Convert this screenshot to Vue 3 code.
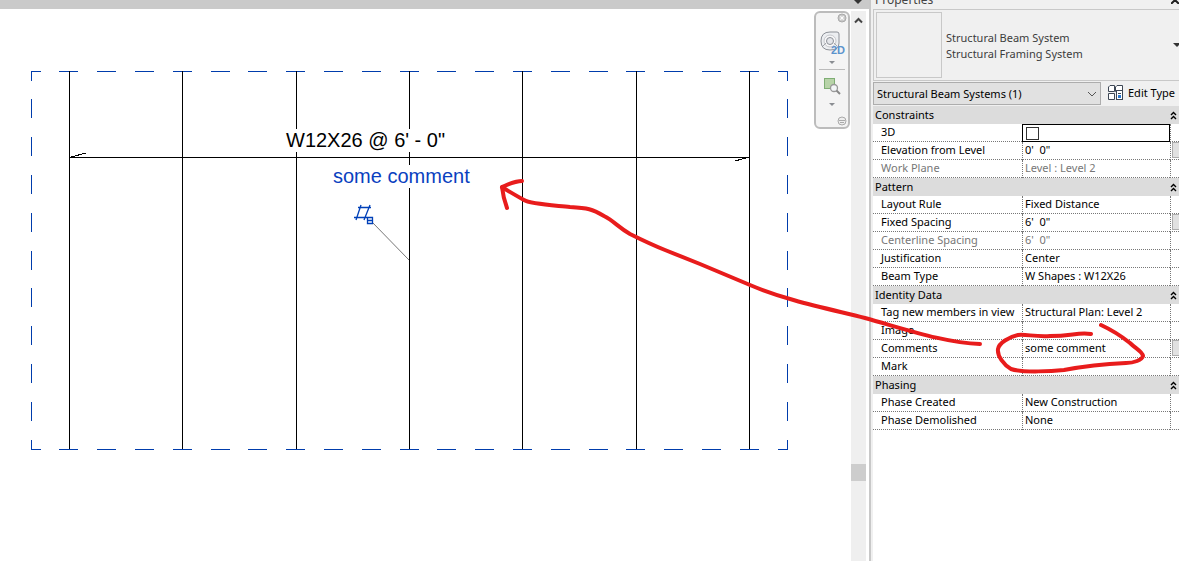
<script setup>
import { ref } from 'vue'

const selectedFilter = ref('Structural Beam Systems (1)')
const is3d = ref(false)

const beams = [
  'M69.5 71V449',
  'M182.5 71V449',
  'M296.5 71V129M296.5 152V449',
  'M409.5 71V129M409.5 152V165M409.5 188V449',
  'M522.5 71V449',
  'M636.5 71V449',
  'M749.5 71V449'
]

const groups = [
  {
    name: 'Constraints',
    rows: [
      { label: '3D', type: 'check' },
      { label: 'Elevation from Level', value: '0\'  0"', button: true },
      { label: 'Work Plane', value: 'Level : Level 2', readonly: true }
    ]
  },
  {
    name: 'Pattern',
    rows: [
      { label: 'Layout Rule', value: 'Fixed Distance' },
      { label: 'Fixed Spacing', value: '6\'  0"', button: true },
      { label: 'Centerline Spacing', value: '6\'  0"', readonly: true },
      { label: 'Justification', value: 'Center' },
      { label: 'Beam Type', value: 'W Shapes : W12X26' }
    ]
  },
  {
    name: 'Identity Data',
    rows: [
      { label: 'Tag new members in view', value: 'Structural Plan: Level 2' },
      { label: 'Image', value: '' },
      { label: 'Comments', value: 'some comment', button: true },
      { label: 'Mark', value: '' }
    ]
  },
  {
    name: 'Phasing',
    rows: [
      { label: 'Phase Created', value: 'New Construction' },
      { label: 'Phase Demolished', value: 'None' }
    ]
  }
]
</script>

<template>
<div class="app">
  <main class="view">
    <div class="view-bar">
      <svg width="8" height="4" viewBox="0 0 8 4"><path d="M0 0H8L4 4Z" fill="#333" /></svg>
    </div>
    <div class="view-body">
      <div class="canvas">
        <svg class="plan" width="800" height="460" viewBox="0 9 800 460">
          <g fill="none" stroke="#003cac" stroke-dasharray="19 18.8" stroke-dashoffset="9.4" shape-rendering="crispEdges">
            <path d="M31 71.5H788" />
            <path d="M31 449.5H788" />
            <path d="M31.5 71V450" />
            <path d="M787.5 71V450" />
          </g>
          <g fill="none" stroke="#000" shape-rendering="crispEdges">
            <path v-for="d in beams" :key="d" :d="d" />
            <path d="M69 157.5H750M71 157L86 153M735 161L749 157" />
          </g>
          <path d="M372 222L409 260" stroke="#777" />
          <g fill="none" stroke="#0040b8" stroke-width="1.3">
            <path d="M358 207.5H371M354 217.5H367M361 205L356 220M370 205L364 220" />
            <path d="M367.5 217.500H372.500V223.500H367.500ZM367.500 220.500H372" />
          </g>
          <text x="286" y="147" class="tag">W12X26 @ 6' - 0"</text>
          <text x="333" y="183" class="tag comment">some comment</text>
        </svg>
        <div class="nav-bar">
          <button class="nav-close" aria-label="Close">
            <svg width="10" height="10" viewBox="0 0 10 10">
              <circle cx="5" cy="5" r="4" fill="#c9c9c9" stroke="#aaa" />
              <path d="M3.4 3.4L6.6 6.6M6.6 3.4L3.4 6.6" stroke="#fff" stroke-width="1.2" />
            </svg>
          </button>
          <button class="nav-wheel" aria-label="Steering wheel">
            <svg width="26" height="26" viewBox="0 0 26 26">
              <path d="M2 10Q2 1 11 1H18Q20 1 20 3V12Q20 19 11 19Q2 19 2 10Z" fill="#eceef1" stroke="#8c9097" />
              <circle cx="11" cy="10" r="6" fill="#f8f8f9" stroke="#c6c8cc" />
              <circle cx="11" cy="10" r="3.5" fill="#e4e6ea" stroke="#8c9097" />
              <path d="M4 15L7 12M15 12L18 15" stroke="#a6a9ae" />
              <text x="12" y="23" class="nav-2d">2D</text>
            </svg>
          </button>
          <svg class="nav-arrow" width="6" height="4" viewBox="0 0 6 4"><path d="M0 0H6L3 3Z" fill="#8a8d92" /></svg>
          <hr />
          <button class="nav-zoom" aria-label="Zoom region">
            <svg width="18" height="18" viewBox="0 0 18 18">
              <rect x="1.5" y="1.5" width="10" height="10" fill="#b7d3a8" stroke="#7fae74" />
              <circle cx="11" cy="11" r="3.5" fill="#f3f6f8" stroke="#999" stroke-width="1.3" />
              <path d="M13.5 13.5L17 17" stroke="#888" stroke-width="2" />
            </svg>
          </button>
          <svg class="nav-arrow" width="6" height="4" viewBox="0 0 6 4"><path d="M0 0H6L3 3Z" fill="#8a8d92" /></svg>
          <button class="nav-options" aria-label="Options">
            <svg width="10" height="10" viewBox="0 0 10 10">
              <circle cx="5" cy="5" r="4" fill="#eee" stroke="#aaa" />
              <path d="M2 4.500H8M3 6.500H7" stroke="#aaa" />
            </svg>
          </button>
        </div>
      </div>
      <div class="scrollbar">
        <svg width="9" height="7" viewBox="0 0 9 7"><path d="M1 5.5L4.5 2L8 5.5" fill="none" stroke="#444" stroke-width="2" /></svg>
        <div class="thumb"></div>
      </div>
    </div>
  </main>

  <aside class="panel">
    <header class="panel-title">
      <span>Properties</span>
      <svg width="8" height="8" viewBox="0 0 8 8"><path d="M0 0L8 8M8 0L0 8" stroke="#222" stroke-width="2" /></svg>
    </header>
    <div class="type-box">
      <div class="preview"></div>
      <div class="type-name">
        <div>Structural Beam System</div>
        <div>Structural Framing System</div>
      </div>
      <svg width="6" height="4" viewBox="0 0 6 4"><path d="M0 0H8L4 4Z" fill="#333" /></svg>
    </div>
    <div class="filter">
      <div class="select">
        <select v-model="selectedFilter" aria-label="Properties filter">
          <option>Structural Beam Systems (1)</option>
        </select>
        <svg width="10" height="6" viewBox="0 0 10 6"><path d="M1 1L5 5L9 1" fill="none" stroke="#555" /></svg>
      </div>
      <button class="edit-type">
        <svg width="17" height="17" viewBox="0 0 17 17">
          <g fill="#fff" stroke="#3c4654">
            <path d="M3 1.5H7.5V7.5H1.5V3ZM10 1.5H15.5V7.5H8.5V3ZM1.5 9.5H7.5V15.5H1.5Z" />
            <rect x="9.5" y="6.5" width="6" height="9" />
          </g>
          <path d="M11 9.5H14" stroke="#3c4654" />
          <rect x="11" y="11" width="3" height="3" fill="#2d7ad0" />
        </svg>
        Edit Type
      </button>
    </div>
    <table>
      <colgroup>
        <col class="col-label" />
        <col class="col-value" />
        <col />
      </colgroup>
      <tbody v-for="group in groups" :key="group.name">
        <tr class="group">
          <th colspan="2">{{ group.name }}</th>
          <th>
            <svg width="7" height="9" viewBox="0 0 7 9"><path d="M1 4L3.5 1.5L6 4M1 8L3.5 5.5L6 8" fill="none" stroke="#000" stroke-width="1.4" /></svg>
          </th>
        </tr>
        <tr v-for="row in group.rows" :key="row.label" :class="{ readonly: row.readonly }">
          <td class="label">
            <label v-if="row.type === 'check'" for="is3d">{{ row.label }}</label>
            <template v-else>{{ row.label }}</template>
          </td>
          <td v-if="row.type === 'check'" class="value active">
            <input id="is3d" v-model="is3d" type="checkbox" />
          </td>
          <td v-else class="value">{{ row.value }}</td>
          <td class="action">
            <button v-if="row.button" :aria-label="'Associate ' + row.label"></button>
          </td>
        </tr>
      </tbody>
    </table>
  </aside>

  <!-- hand drawn markup over the view and the panel -->
  <svg class="markup" width="700" height="220" viewBox="479 170 700 220">
    <g fill="none" stroke="#e81c1c" stroke-width="4" stroke-linecap="round" stroke-linejoin="round">
      <path d="M980 344C945 343 905 329 865 318C825 308 785 300 750 285L700 264L665 250C650 244 640 239 630 234C618 227 614 221 604 216C592 209 588 208 570 207C550 205 530 204 524 200C515 195 508 191 502 187" />
      <path d="M522 181C515 181 509 184 502 187C503 196 504 200 507 208" />
      <path d="M1091 334C1078 332 1072 336 1050 336C1035 337 1026 334 1018 335C1009 337 999 343 998 349C997 356 1004 365 1011 369C1023 373 1054 371 1064 370C1085 366 1104 364 1126 363C1134 363 1142 360 1143 356C1142 351 1136 349 1130 343C1120 335 1114 331 1101 325" />
    </g>
  </svg>
</div>
</template>

<style>
body {
  margin: 0;
  background: #fff;
}
</style>

<style scoped>
.app {
  position: relative;
  display: flex;
  min-height: 100vh;
  overflow: hidden;
  font-family: "Noto Sans", "Open Sans", sans-serif;
  font-size: 11px;
  line-height: 16px;
  color: #000;
}

button {
  margin: 0;
  padding: 0;
  border: 0;
  background: none;
  font: inherit;
  color: inherit;
}

svg {
  display: block;
  flex: none;
}

.view {
  display: flex;
  flex: 1;
  flex-direction: column;
  min-width: 0;
}

.view-bar {
  display: flex;
  justify-content: flex-end;
  height: 9px;
  padding-right: 7px;
  background: #cacaca;
}

.view-body {
  display: flex;
  flex: 1;
}

.canvas {
  display: flex;
  flex: 1;
  justify-content: space-between;
  min-width: 0;
  padding-right: 1px;
}

.tag {
  font-family: "Liberation Sans", sans-serif;
  font-size: 20px;
}

.comment {
  fill: #0a3fc0;
}

.nav-bar {
  box-sizing: border-box;
  display: flex;
  flex-direction: column;
  align-items: center;
  width: 36px;
  height: 118px;
  margin-top: 2px;
  border: 2px solid #bcbcbc;
  border-radius: 6px;
  background: #f4f4f4;
}

.nav-close,
.nav-options {
  align-self: flex-end;
  margin-right: 1px;
}

.nav-wheel {
  margin-top: 8px;
}

.nav-2d {
  font-family: "Liberation Sans", sans-serif;
  font-size: 11px;
  font-weight: bold;
  fill: #5b93cc;
}

.nav-arrow {
  margin-top: 4px;
}

.nav-bar hr {
  width: 26px;
  margin: 4px 0 7px;
  border: 0;
  border-top: 1px solid #bbb;
}

.nav-zoom + .nav-arrow {
  margin-top: 8px;
}

.nav-options {
  margin-top: auto;
  margin-bottom: 1px;
}

.scrollbar {
  display: flex;
  flex-direction: column;
  align-items: center;
  width: 15px;
  padding-top: 6px;
  margin: 2px 3px 0 0;
  background: #efefef;
}

.thumb {
  width: 15px;
  height: 17px;
  margin-top: 440px;
  background: #cdcdcd;
}

.panel {
  width: 306px;
  border-left: 2px solid #c8c8c8;
  box-shadow: inset 2px 0 #f0f0f0;
  padding-left: 2px;
}

.panel-title {
  display: flex;
  justify-content: space-between;
  height: 9px;
  padding: 0 0 0 2px;
  background: #f0f0f0;
  color: #444;
  font-size: 12px;
}

.panel-title span {
  margin-top: -8px;
}

.panel-title svg {
  margin-top: -4px;
}

.type-box {
  display: flex;
  align-items: center;
  height: 66px;
  padding: 2px 0 2px 2px;
  border: 1px solid #c8c8c8;
  border-right: 0;
  background: #f0f0f0;
  color: #3c3c3c;
}

.preview {
  box-sizing: border-box;
  width: 66px;
  height: 66px;
  border: 1px solid #c8c8c8;
}

.type-name {
  flex: 1;
  padding: 2px 0 0 4px;
}

.filter {
  display: flex;
  align-items: center;
  height: 25px;
  background: #f0f0f0;
}

.select {
  position: relative;
  flex: none;
  width: 228px;
}

.select select {
  display: block;
  box-sizing: border-box;
  width: 100%;
  height: 23px;
  padding: 0 3px;
  border: 1px solid #adadad;
  border-radius: 0;
  background: #e1e1e1;
  font: inherit;
  color: #000;
  appearance: none;
}

.select svg {
  position: absolute;
  top: 9px;
  right: 4px;
  pointer-events: none;
}

.edit-type {
  display: flex;
  gap: 4px;
  align-items: center;
  padding: 0 0 2px 6px;
  white-space: nowrap;
}

table {
  width: 100%;
  table-layout: fixed;
  border-collapse: separate;
  border-spacing: 0;
}

.col-label {
  width: 149px;
}

.col-value {
  width: 148px;
}

tr {
  height: 18px;
}

th {
  height: 18px;
  padding: 0 0 0 2px;
  background: #dcdcdc;
  font-weight: normal;
  text-align: left;
}

th + th {
  padding: 0;
}

td {
  height: 17px;
  padding: 0;
  border-bottom: 1px dotted #777;
  line-height: 16px;
  vertical-align: top;
  white-space: pre;
}

.label {
  padding-left: 8px;
}

.value {
  padding-left: 2px;
  border-left: 1px dotted #777;
}

.value.active {
  height: 16px;
  border: 1px solid #000;
  line-height: 0;
}

.active input {
  box-sizing: border-box;
  width: 13px;
  height: 13px;
  margin: 2px 0 0 1px;
  border: 1px solid #333;
  background: #fff;
  appearance: none;
}

.active input:checked {
  background: #333;
}

.readonly {
  color: #777;
}

.action {
  padding-left: 1px;
  border-left: 1px dotted #777;
}

.action button {
  display: block;
  width: 100%;
  height: 16px;
  border: 1px solid #adadad;
  border-right: 0;
  background: #e1e1e1;
}

.markup {
  position: absolute;
  top: 170px;
  right: 0;
  pointer-events: none;
}
</style>
